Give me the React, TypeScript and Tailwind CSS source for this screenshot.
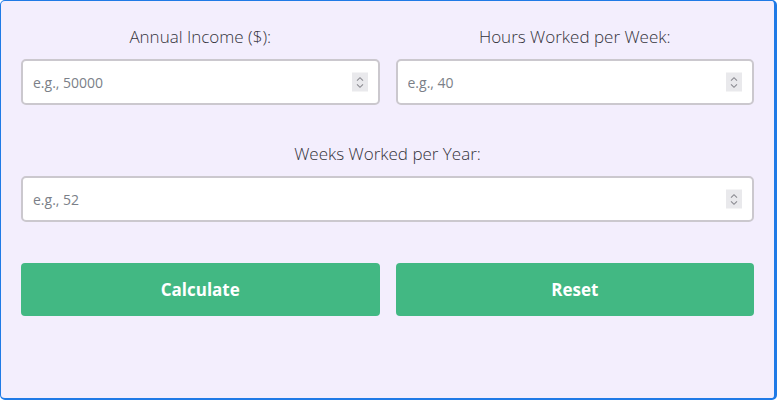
import { useState } from "react";

function Spinner() {
  return (
    <span
      aria-hidden
      className="pointer-events-none absolute right-[12px] top-1/2 flex h-[19px] w-[16px] -translate-y-1/2 flex-col items-center justify-center gap-[2px] bg-[#e9e9ec]"
    >
      <svg width="8" height="5" viewBox="0 0 8 5" fill="none">
        <path d="M1 4.2 4 1.2 7 4.2" stroke="#8a8a90" strokeWidth="1.1" />
      </svg>
      <svg width="8" height="5" viewBox="0 0 8 5" fill="none">
        <path d="M1 0.8 4 3.8 7 0.8" stroke="#8a8a90" strokeWidth="1.1" />
      </svg>
    </span>
  );
}

function Field({
  label,
  placeholder,
  value,
  onChange,
}: {
  label: string;
  placeholder: string;
  value: string;
  onChange: (v: string) => void;
}) {
  return (
    <div className="flex flex-col">
      <label className="mb-[10px] text-center text-[17px] font-light leading-[24px] text-[#33333b]">
        {label}
      </label>
      <div className="relative">
        <input
          type="text"
          inputMode="numeric"
          placeholder={placeholder}
          value={value}
          onChange={(e) => onChange(e.target.value)}
          className="box-border h-[46px] w-full rounded-[5px] border-2 border-[#cbc8ce] bg-white px-[10px] text-[14px] text-[#333] outline-none placeholder:text-[#7b7f88]"
        />
        <Spinner />
      </div>
    </div>
  );
}

export default function App() {
  const [income, setIncome] = useState("");
  const [hours, setHours] = useState("");
  const [weeks, setWeeks] = useState("");

  function reset() {
    setIncome("");
    setHours("");
    setWeeks("");
  }

  return (
    <div
      className="h-[400px] w-[777px] rounded-[5px] border-b-2 border-l border-r-[3px] border-t border-[#1f7ae6] bg-[#f3eefd] px-[20px] pt-[24px]"
      style={{ fontFamily: '"Open Sans", "Noto Sans", sans-serif' }}
    >
      <div className="grid grid-cols-2 gap-x-[16px]">
        <Field label="Annual Income ($):" placeholder="e.g., 50000" value={income} onChange={setIncome} />
        <Field label="Hours Worked per Week:" placeholder="e.g., 40" value={hours} onChange={setHours} />
      </div>
      <div className="mt-[37px]">
        <Field label="Weeks Worked per Year:" placeholder="e.g., 52" value={weeks} onChange={setWeeks} />
      </div>
      <div className="mt-[41px] grid grid-cols-2 gap-x-[16px]">
        <button
          type="button"
          className="h-[53px] rounded-[4px] bg-[#42b883] text-[17px] font-bold text-white"
        >
          Calculate
        </button>
        <button
          type="button"
          onClick={reset}
          className="h-[53px] rounded-[4px] bg-[#42b883] text-[17px] font-bold text-white"
        >
          Reset
        </button>
      </div>
    </div>
  );
}
